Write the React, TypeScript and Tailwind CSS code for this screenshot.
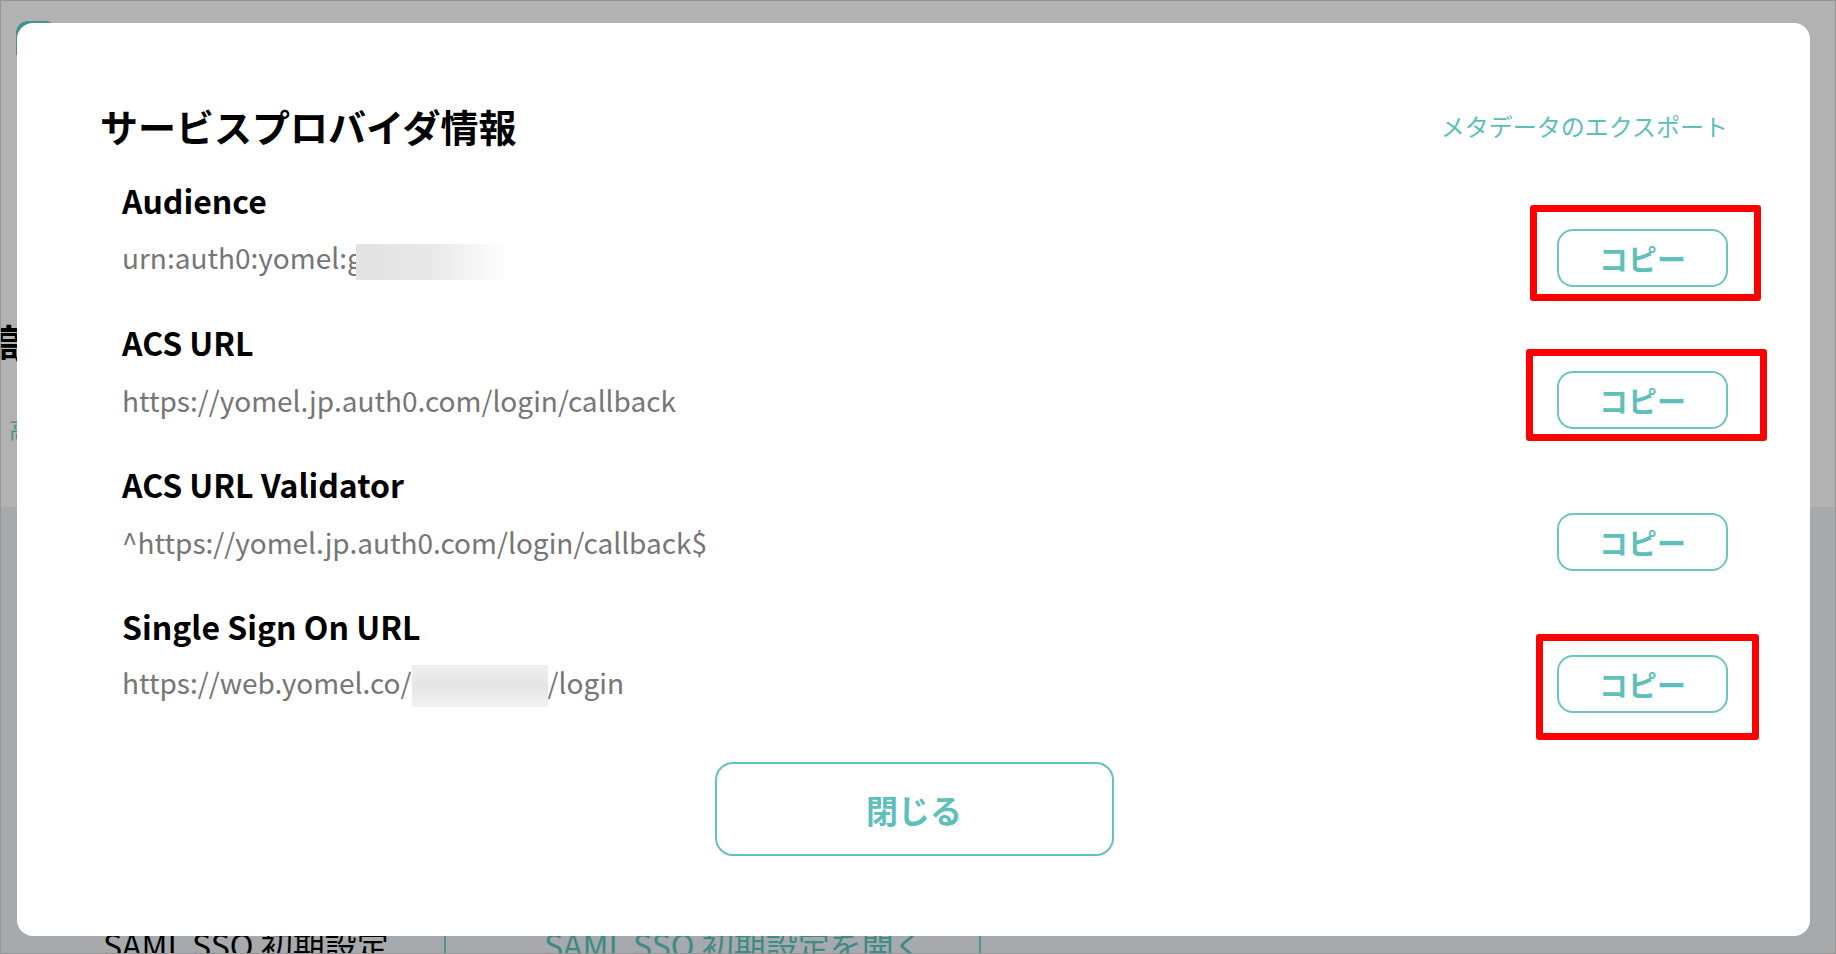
import React from "react"

type Row = {
    label: string
    value: React.ReactNode
    mark?: string
}

const rows: Row[] = [
    {
        label: "Audience",
        value: (
            <>
                urn:auth0:yomel:g
                <span className="relative inline-block align-middle ml-[-7px] w-[152px] h-[36px] bg-linear-to-r from-[#e2e2e2] via-[#e9e9e9] to-white" />
            </>
        ),
        mark: "-left-[27px] -right-[33px] -top-[24px] -bottom-[14px]",
    },
    {
        label: "ACS URL",
        value: "https://yomel.jp.auth0.com/login/callback",
        mark: "-left-[31px] -right-[39px] -top-[22px] -bottom-[12px]",
    },
    {
        label: "ACS URL Validator",
        value: "^https://yomel.jp.auth0.com/login/callback$",
    },
    {
        label: "Single Sign On URL",
        value: (
            <>
                https://web.yomel.co/
                <span className="relative inline-block align-middle w-[136px] h-[42px] bg-linear-to-b from-[#efefef] via-[#e5e5e5] to-[#f3f3f3]" />
                /login
            </>
        ),
        mark: "-left-[21px] -right-[31px] -top-[21px] -bottom-[27px]",
    },
]

function CopyButton({ mark }: { mark?: string }) {
    return (
        <div className="relative">
            <button className="w-[171px] h-[58px] rounded-[16px] border-2 border-[#6cc5c0] bg-white text-[#5fc0bb] text-[29px] font-bold leading-none flex items-center justify-center">
                コピー
            </button>
            {/* red annotation frame */}
            {mark && <span className={`absolute ${mark} border-[7px] border-[#ff0000] rounded-[3px] pointer-events-none`} />}
        </div>
    )
}

function Modal() {
    return (
        <div className="absolute left-[16px] top-[22px] w-[1793px] h-[913px] bg-white rounded-[16px] pt-[76px] pl-[83px] pr-[82px]">
            {/* header */}
            <div className="flex items-center justify-between h-[54px]">
                <h2 className="text-[38px] font-bold leading-[54px] text-black">サービスプロバイダ情報</h2>
                <a className="text-[24px] leading-[34px] text-[#5dbfba] cursor-pointer">メタデータのエクスポート</a>
            </div>

            {/* rows */}
            <div className="mt-[26px] pl-[22px] flex flex-col gap-[34px]">
                {rows.map((r) => (
                    <div key={r.label}>
                        <div className="text-[32px] font-bold leading-[42px] text-black">{r.label}</div>
                        <div className="mt-[8px] h-[58px] flex items-center justify-between">
                            <div className="text-[28px] leading-[42px] text-[#767676] whitespace-nowrap">{r.value}</div>
                            <CopyButton mark={r.mark} />
                        </div>
                    </div>
                ))}
            </div>

            {/* close */}
            <button className="mt-[49px] mx-auto w-[399px] h-[94px] rounded-[18px] border-2 border-[#62c2bd] text-[#5fc0bb] text-[32px] font-bold flex items-center justify-center">
                閉じる
            </button>
        </div>
    )
}

export default function App() {
    return (
        <div className="relative w-[1836px] h-[954px] overflow-hidden border border-[#969696] flex flex-col font-['Noto_Sans_CJK_JP',sans-serif]">
            {/* page behind the overlay */}
            <div className="h-[506px] bg-[#b2b2b2] pt-[20px] pl-[15px] flex flex-col">
                <div className="w-[38px] h-[34px] bg-[#45918b] rounded-tl-[12px] rounded-tr-[8px]" />
                <div className="ml-[-26px] mt-[266px] text-[38px] font-bold leading-[40px] text-black">高</div>
                <div className="ml-[-7px] mt-[54px] text-[22px] leading-[26px] text-[#4b8f8a]">高</div>
            </div>
            <div className="flex-1 bg-[#a6aaad] overflow-hidden">
                <div className="mt-[415px] flex h-[60px]">
                    <div className="w-[445px] pl-[102px] border-r-2 border-[#4f9691] text-[32px] leading-[44px] text-black whitespace-nowrap">
                        SAML SSO 初期設定
                    </div>
                    <div className="w-[535px] pl-[98px] border-r-2 border-[#4f9691] text-[32px] leading-[44px] text-[#3e8a84] whitespace-nowrap">
                        SAML SSO 初期設定を開く
                    </div>
                </div>
            </div>

            <Modal />
        </div>
    )
}
